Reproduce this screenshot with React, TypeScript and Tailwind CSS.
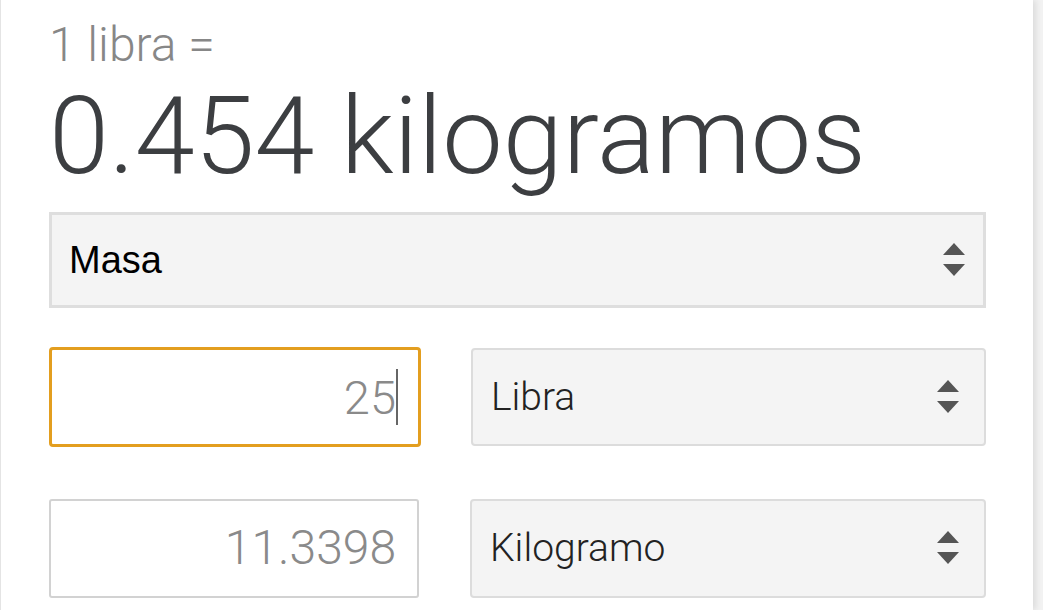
import React from 'react';

const roboto = { fontFamily: 'Roboto, "Noto Sans", sans-serif' };

const SortArrows: React.FC<{ className?: string }> = ({ className }) => (
    <svg viewBox="0 0 22 34" className={className} fill="#555555">
        <path d="M0 12 L11 0 L22 12 Z" />
        <path d="M0 21 L22 21 L11 33 Z" />
    </svg>
);

interface SelectBoxProps {
    label: string;
    className?: string;
}

const UnitSelect: React.FC<SelectBoxProps> = ({ label, className }) => (
    <div className={`flex items-center justify-between bg-[#f4f4f4] border-2 border-[#dcdcdc] rounded-[4px] pl-[18px] pr-[25px] ${className ?? ''}`}>
        <span className="text-[39px] font-light text-[#222222] leading-none" style={roboto}>{label}</span>
        <SortArrows className="w-[22px] h-[34px]" />
    </div>
);

export default function App() {
    return (
        <div className="w-[1043px] h-[610px] overflow-hidden bg-[#f2f2f2] flex">
            <div className="w-[1033px] h-full bg-white border-l border-[#e4e4e4] shadow-[3px_0_6px_rgba(0,0,0,0.09)] pl-[48px] pr-[47px] pt-[21px]">
                <div className="text-[48px] leading-[48px] font-light text-[#878787]" style={roboto}>1 libra =</div>
                <div className="mt-[13px] text-[108px] leading-[108px] font-light text-[#3c3e41] whitespace-nowrap" style={roboto}>0.454 kilogramos</div>

                <div className="mt-[22px] h-[96px] flex items-center justify-between bg-[#f4f4f4] border-[3px] border-[#dedede] pl-[17px] pr-[18px]">
                    <span className="text-[38px] leading-none text-black" style={{ fontFamily: '"Liberation Sans", Arial, sans-serif' }}>Masa</span>
                    <SortArrows className="w-[22px] h-[34px]" />
                </div>

                <div className="mt-[39px] h-[100px] flex items-center gap-[50px]">
                    <div className="w-[372px] h-[100px] border-[3px] border-[#e39e1f] rounded-[4px] flex items-center justify-end pr-[20px]">
                        <span className="text-[47px] font-light text-[#8a8a8a] leading-none" style={roboto}>25</span>
                        <span className="w-[2px] h-[56px] bg-[#666666]" />
                    </div>
                    <UnitSelect label="Libra" className="flex-1 h-[98px]" />
                </div>

                <div className="mt-[51px] h-[100px] flex items-center gap-[51px]">
                    <div className="w-[370px] h-[99px] border-2 border-[#d2d2d2] rounded-[3px] flex items-center justify-end pr-[21px]">
                        <span className="text-[48px] font-light text-[#8a8a8a] leading-none" style={roboto}>11.3398</span>
                    </div>
                    <UnitSelect label="Kilogramo" className="flex-1 h-[99px]" />
                </div>
            </div>
        </div>
    );
}
